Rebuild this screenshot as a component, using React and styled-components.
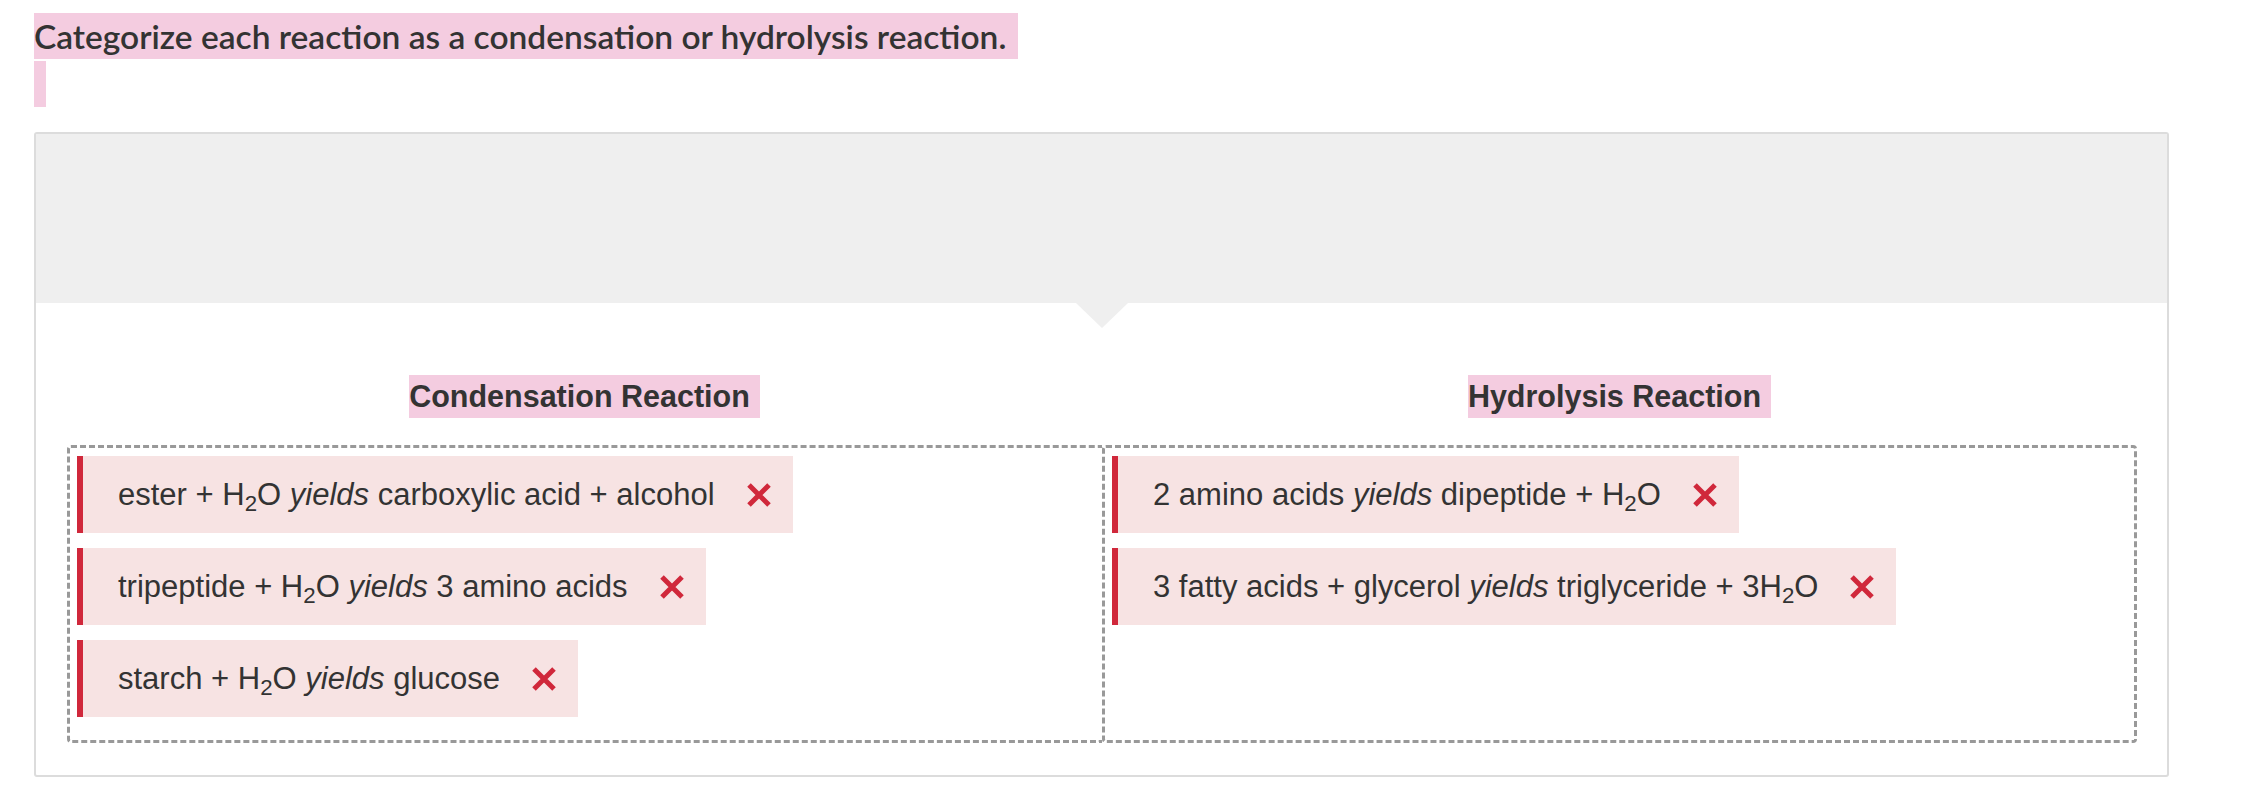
import React from "react";
import styled, { createGlobalStyle } from "styled-components";

const GlobalStyle = createGlobalStyle`
  body {
    margin: 0;
    background: #fff;
    font-family: "Liberation Sans", Arial, sans-serif;
    color: #333;
  }
`;

const Page = styled.div`
  padding: 13px 91px 40px 34px;
`;

const Prompt = styled.div`
  display: inline-block;
  font-family: Lato, "Liberation Sans", sans-serif;
  font-weight: 600;
  font-size: 33.5px;
  line-height: 46px;
  background: #f4cce0;
  padding-right: 12px;
  color: #333;
`;

const EmptyLine = styled.div`
  width: 12px;
  height: 46px;
  margin-top: 2px;
  background: #f4cce0;
`;

const Panel = styled.div`
  margin-top: 25px;
  border: 2px solid #dcdcdc;
  border-radius: 3px;
`;

const Tray = styled.div`
  position: relative;
  height: 169px;
  background: #efefef;

  &::after {
    content: "";
    position: absolute;
    left: 50%;
    bottom: -25px;
    transform: translateX(-50%);
    border-left: 26px solid transparent;
    border-right: 26px solid transparent;
    border-top: 25px solid #efefef;
  }
`;

const Body = styled.div`
  padding: 72px 30px 32px 31px;
`;

const Columns = styled.div`
  display: grid;
  grid-template-columns: 1fr 1fr;
`;

const Column = styled.div`
  display: flex;
  flex-direction: column;
  align-items: center;
`;

const Heading = styled.div`
  font-weight: 700;
  font-size: 30.5px;
  line-height: 43px;
  background: #f4cce0;
  padding-right: 10px;
  color: #333;
  margin-bottom: 27px;
`;

const DropZone = styled.div`
  align-self: stretch;
  flex: 1;
  display: flex;
  flex-direction: column;
  align-items: flex-start;
  gap: 15px;
  padding: 8px 8px 23px 7px;
  border: 3px dashed #999;
  border-right-width: ${(p) => (p.$first ? "0" : "3px")};
  border-radius: ${(p) => (p.$first ? "4px 0 0 4px" : "4px")};
`;

const Item = styled.div`
  display: inline-flex;
  align-items: center;
  height: 77px;
  padding: 0 22px 0 35px;
  border-left: 6px solid #d0283b;
  background: #f7e3e3;
  font-size: 31px;
  color: #333;
  white-space: nowrap;
`;

const Label = styled.span`
  margin-right: 32px;
  em {
    font-style: italic;
  }
`;

const Sub = styled.sub`
  font-size: 0.72em;
  line-height: 0;
  vertical-align: -0.25em;
`;

const Wrong = () => (
  <svg width="24" height="24" viewBox="0 0 24 24">
    <path d="M2 2 L22 22 M22 2 L2 22" stroke="#d0283b" strokeWidth="5" fill="none" />
  </svg>
);

const H2O = ({ n }) => (
  <>
    {n}H<Sub>2</Sub>O
  </>
);

const condensation = [
  <>ester + <H2O /> <em>yields</em> carboxylic acid + alcohol</>,
  <>tripeptide + <H2O /> <em>yields</em> 3 amino acids</>,
  <>starch + <H2O /> <em>yields</em> glucose</>,
];

const hydrolysis = [
  <>2 amino acids <em>yields</em> dipeptide + <H2O /></>,
  <>3 fatty acids + glycerol <em>yields</em> triglyceride + <H2O n="3" /></>,
];

const Reaction = ({ children }) => (
  <Item>
    <Label>{children}</Label>
    <Wrong />
  </Item>
);

export default function App() {
  return (
    <Page>
      <GlobalStyle />
      <Prompt>Categorize each reaction as a condensation or hydrolysis reaction.</Prompt>
      <EmptyLine />
      <Panel>
        <Tray />
        <Body>
          <Columns>
            <Column>
              <Heading>Condensation Reaction</Heading>
              <DropZone $first>
                {condensation.map((r, i) => (
                  <Reaction key={i}>{r}</Reaction>
                ))}
              </DropZone>
            </Column>
            <Column>
              <Heading>Hydrolysis Reaction</Heading>
              <DropZone>
                {hydrolysis.map((r, i) => (
                  <Reaction key={i}>{r}</Reaction>
                ))}
              </DropZone>
            </Column>
          </Columns>
        </Body>
      </Panel>
    </Page>
  );
}
